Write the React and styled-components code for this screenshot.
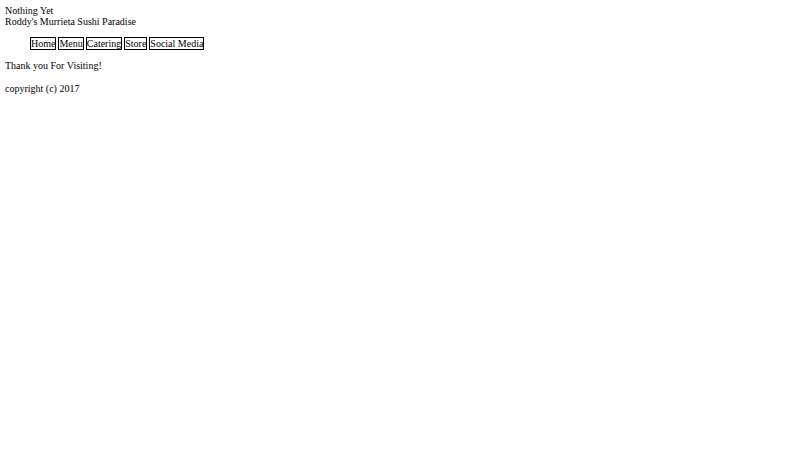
import React from "react";
import styled, { createGlobalStyle } from "styled-components";

const Global = createGlobalStyle`
  html, body { margin: 0; padding: 0; background: #fff; }
  body {
    margin: 5px;
    font-family: "Liberation Serif", "Times New Roman", serif;
    font-size: 10px;
    color: #000;
  }
`;

const Header = styled.header`
  line-height: 11px;
`;

const Line = styled.div``;

const Nav = styled.ul`
  list-style: none;
  margin: 10px 0 0;
  padding-left: 25px;
  display: flex;
  gap: 2px;
`;

const Item = styled.li`
  display: block;
`;

const Link = styled.span`
  display: block;
  border: 1px solid #000;
  padding: 0;
  line-height: 11px;
`;

const Para = styled.p`
  margin: ${(p) => p.$top || 10}px 0 0;
  line-height: 11.5px;
`;

const items = ["Home", "Menu", "Catering", "Store", "Social Media"];

export default function App() {
  return (
    <>
      <Global />
      <Header>
        <Line>Nothing Yet</Line>
        <Line>Roddy's Murrieta Sushi Paradise</Line>
      </Header>
      <Nav>
        {items.map((t) => (
          <Item key={t}>
            <Link>{t}</Link>
          </Item>
        ))}
      </Nav>
      <Para $top={10}>Thank you For Visiting!</Para>
      <Para $top={11.5}>copyright (c) 2017</Para>
    </>
  );
}
